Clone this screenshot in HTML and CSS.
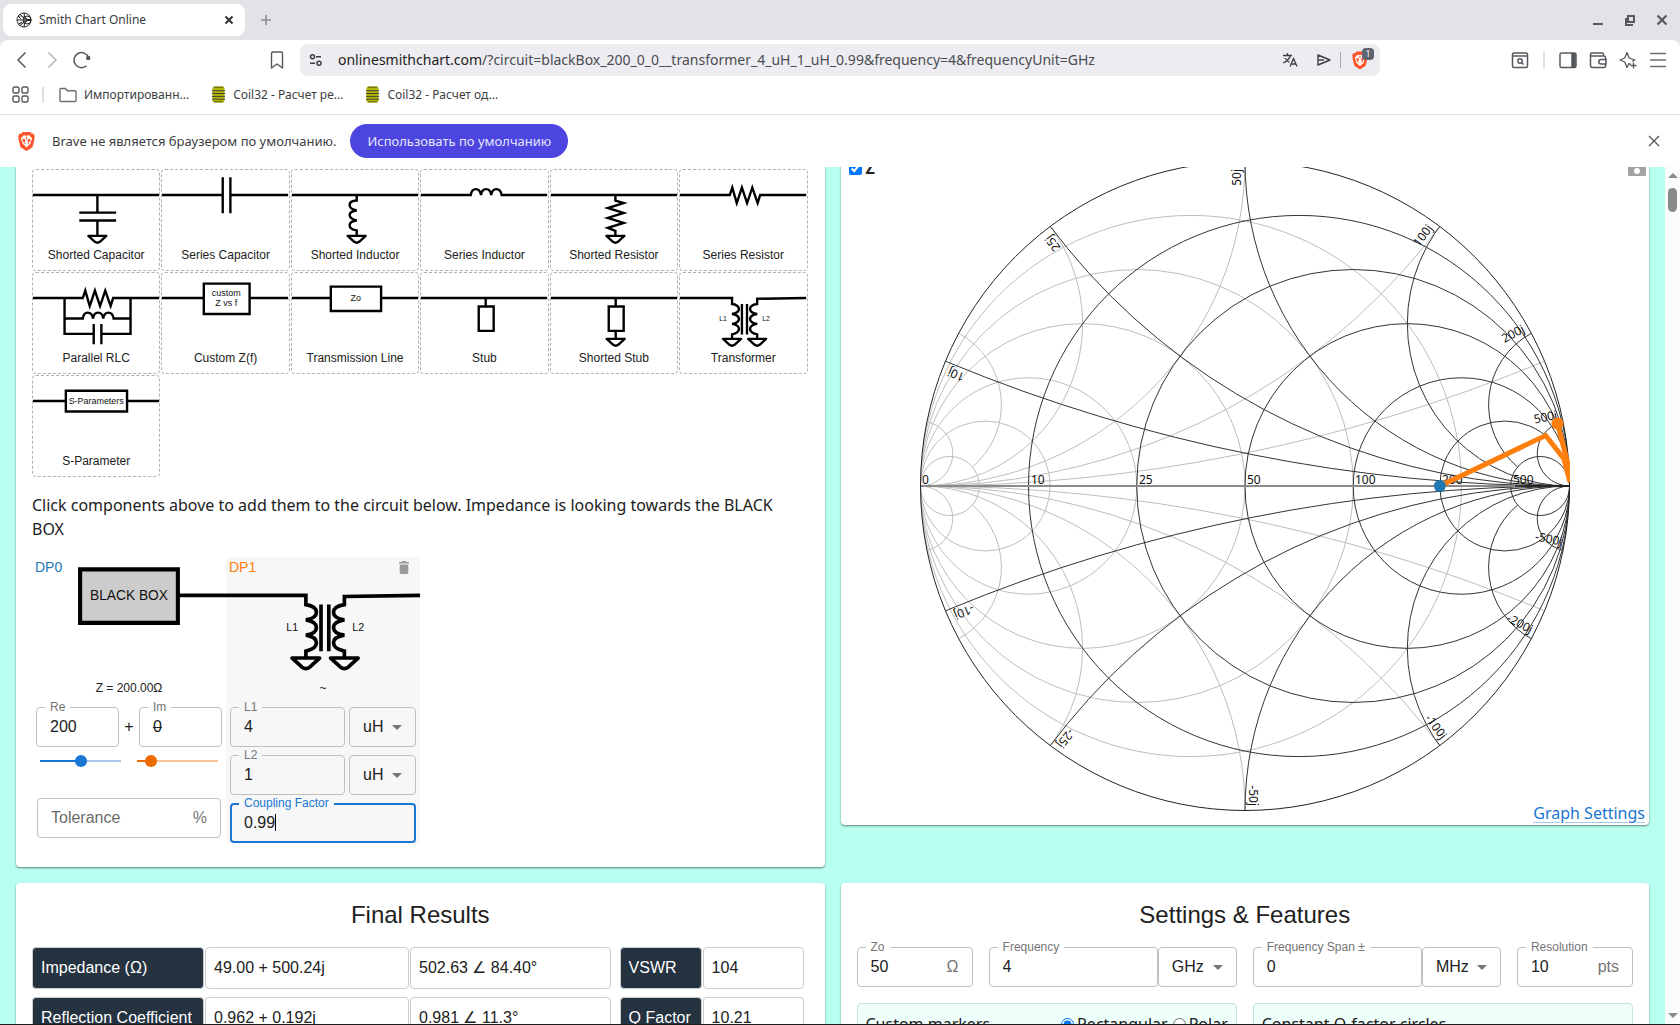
FILE: index.html
```html
<!DOCTYPE html>
<html lang="ru">
<head>
<meta charset="utf-8">
<title>Smith Chart Online</title>
<link rel="stylesheet" href="styles.css">
</head>
<body>
<svg class="defs" aria-hidden="true">
  <defs>
    <g id="ground"><path stroke-linejoin="round" d="M-9 0H9L2.500 6Q0 7.800 -2.500 6Z"/></g>
    <symbol id="s-shortcap" viewBox="0 0 127 75"><path d="M0 25H127M64.7 25V42.7M46.5 42.7H83.5M46.5 50.5H83.5M64.7 50.5V66"/><use href="#ground" x="64.7" y="66"/></symbol>
    <symbol id="s-sercap" viewBox="0 0 127 75"><path d="M0 25H61M61 7V43.300M68.700 7V43.300M68.700 25H127"/></symbol>
    <symbol id="s-shortind" viewBox="0 0 127 75"><path d="M0 25H127M65 25V30.500C55.500 31 55.500 38.500 65 40.500C55.500 41.500 55.500 48.500 65 50.500C55.500 51.500 55.500 59 65 60.500V66"/><use href="#ground" x="65" y="66"/></symbol>
    <symbol id="s-serind" viewBox="0 0 127 75"><path d="M0 25H50C51 17 59 17 60.300 25C61.300 17 69.500 17 70.600 25C71.600 17 79.800 17 81 25H127"/></symbol>
    <symbol id="s-shortres" viewBox="0 0 127 75"><path d="M0 25H127M64.700 25V30.500L73 33L57 38L73 43L57 48L73 53L57 58L64.700 61V66"/><use href="#ground" x="64.700" y="66"/></symbol>
    <symbol id="s-serres" viewBox="0 0 127 75"><path d="M0 25H50L52.500 17.500L57 33L62.200 17.500L67.400 33L72.600 17.500L78 33L80.500 25H127"/></symbol>
    <symbol id="s-rlc" viewBox="0 0 127 75"><path d="M0 25H50L52.500 17.500L57 33L62.200 17.500L67.400 33L72.600 17.500L78 33L80.500 25H127M31.700 25V61H61M98 25V61H68.700M61 51V71.500M68.700 51V71.500M31.700 45.600H50C51 37.600 59 37.600 60.300 45.600C61.300 37.600 69.500 37.600 70.600 45.600C71.600 37.600 79.800 37.600 81 45.600H98"/></symbol>
    <symbol id="s-custom" viewBox="0 0 127 75"><path d="M0 25H42M88 25H127M42 10.500H88V41H42Z"/><text x="64.500" y="23.300">custom</text><text x="64.500" y="33">Z vs f</text></symbol>
    <symbol id="s-line" viewBox="0 0 127 75"><path d="M0 25H39M89.500 25H127M39 13.500H89.500V38H39Z"/><text x="64" y="28">Zo</text></symbol>
    <symbol id="s-stub" viewBox="0 0 127 75"><path d="M0 25H127M65 25V33.500M58 33.500H73V58H58Z"/></symbol>
    <symbol id="s-shortstub" viewBox="0 0 127 75"><path d="M0 25H127M65 25V33.500M58 33.500H73V58H58ZM65 58V66"/><use href="#ground" x="65" y="66"/></symbol>
    <symbol id="s-trans" viewBox="0 0 127 75"><path d="M0 25H52.300V31C61.500 32.500 61.500 39.500 52.300 41C61.500 42.500 61.500 49.500 52.300 51C61.500 52.500 61.500 59.500 52.300 61.500V66M127 25L77.500 25.700V31C68 32.500 68 39.500 77.500 41C68 42.500 68 49.500 77.500 51C68 52.500 68 59.500 77.500 61.500V66M62.200 31V61.500M67.300 31V61.500"/><use href="#ground" x="52.300" y="66"/><use href="#ground" x="77.500" y="66"/><text class="tiny" x="43.300" y="48">L1</text><text class="tiny" x="86.500" y="48">L2</text></symbol>
    <symbol id="s-sparam" viewBox="0 0 127 75"><path d="M0 25H33M94.500 25H127M33 14.700H94.500V35.500H33Z"/><text x="63.500" y="28">S-Parameters</text></symbol>
    <symbol id="s-blackbox" viewBox="0 0 127 75"><path class="filled" d="M31.500 8H95.500V43H31.500Z"/><path d="M95.500 25H127"/><text x="63.500" y="28">BLACK BOX</text></symbol>
    <symbol id="brave" viewBox="0 0 18 20"><path fill="#fb542b" d="M5 0h8l1.600 1.800 1.700-.3 1.500 3-.5 1.500.2 1.500-2.200 8.500-6.300 4-6.300-4L.5 7.500.7 6 .2 4.500l1.500-3 1.700.3z"/><path fill="#fff" d="M6 3.500l3 .5 3-.5 3 3.300-1.800 4.200.2 1.500-2 1.300L9 16.500l-2.400-2.700-2-1.300.2-1.500L3 6.800z"/><path fill="#fb542b" d="M4.500 7l3 .7.500 1.500-1.500 2L8 12.200v.8L6.500 12 5.500 10zM13.500 7l-3 .7-.5 1.500 1.500 2-1.500 1v.8l1.500-1 1-2zM8.300 5h1.400l-.2 2.500h-1z"/></symbol>
    <symbol id="coil" viewBox="0 0 16 18"><rect x="1.500" y=".5" width="13" height="17" rx="2.500" fill="#b5b800"/><path d="M1 5h14M1 8h14M1 11h14M1 14h14" stroke="#2a2740" stroke-width=".9"/><path d="M3 1.200h10M3 16.800h10" stroke="#55580c" stroke-width="1"/></symbol>
    <g id="grid">
      <circle cx="54.120" r="270.580"/><circle cx="108.230" r="216.470"/><circle cx="162.350" r="162.350"/><circle cx="216.470" r="108.230"/><circle cx="259.760" r="64.940"/><circle cx="295.180" r="29.520"/>
      <circle cx="324.700" cy="-1623.500" r="1623.500"/><circle cx="324.700" cy="-649.400" r="649.400"/><circle cx="324.700" cy="-324.700" r="324.700"/><circle cx="324.700" cy="-162.350" r="162.350"/><circle cx="324.700" cy="-32.470" r="32.470"/>
      <circle cx="324.700" cy="1623.500" r="1623.500"/><circle cx="324.700" cy="649.400" r="649.400"/><circle cx="324.700" cy="324.700" r="324.700"/><circle cx="324.700" cy="162.350" r="162.350"/><circle cx="324.700" cy="32.470" r="32.470"/>
      <path d="M286.500 -152.800A81.175 81.175 0 0 0 272.600 -19M286.500 152.800A81.175 81.175 0 0 1 272.600 19"/>
    </g>
    <clipPath id="disc"><circle r="324.700"/></clipPath>
  </defs>
</svg>

<header class="browser">
  <div class="tabs">
    <div class="tab">
      <svg width="16" height="16" viewBox="0 0 16 16" fill="none" stroke="#222"><circle cx="8" cy="8" r="7"/><circle cx="11" cy="8" r="4"/><circle cx="5" cy="8" r="4" stroke="#888"/><path d="M1 8h14M4 2q4 6 11 6M4 14q4-6 11-6M8 1q0 7 7 7M8 15q0-7 7-7M2 4l3 3M3 12l3-2"/></svg>
      <span class="tab-title">Smith Chart Online</span>
      <button class="plain" aria-label="Закрыть вкладку"><svg width="10" height="10" viewBox="0 0 10 10" stroke="#333" stroke-width="2"><path d="M1.500 1.500l7 7M8.500 1.500l-7 7"/></svg></button>
    </div>
    <button class="plain newtab" aria-label="Новая вкладка"><svg width="12" height="12" viewBox="0 0 12 12" stroke="#8b8b91" stroke-width="1.600"><path d="M6 1v10M1 6h10"/></svg></button>
    <div class="winbtns">
      <button class="plain" aria-label="Свернуть"><svg width="12" height="12" viewBox="0 0 12 12"><path d="M1 9h10v2H1z" fill="#55585d"/></svg></button>
      <button class="plain" aria-label="Развернуть"><svg width="12" height="12" viewBox="0 0 12 12" fill="none" stroke="#55585d" stroke-width="2"><path d="M4 2h6v6H4zM2 4v7h7"/></svg></button>
      <button class="plain" aria-label="Закрыть"><svg width="12" height="12" viewBox="0 0 12 12" stroke="#55585d" stroke-width="2.200"><path d="M1.500 1.500l9 9M10.500 1.500l-9 9"/></svg></button>
    </div>
  </div>

  <div class="toolbar">
    <div class="nav">
      <button class="plain" aria-label="Назад"><svg width="20" height="20" viewBox="0 0 20 20" fill="none" stroke="#55585d" stroke-width="1.500"><path d="M13.500 2.500L6 10l7.500 7.500"/></svg></button>
      <button class="plain" aria-label="Вперёд"><svg width="20" height="20" viewBox="0 0 20 20" fill="none" stroke="#b5b6ba" stroke-width="1.500"><path d="M6.500 2.500L14 10l-7.500 7.500"/></svg></button>
      <button class="plain" aria-label="Обновить"><svg width="20" height="20" viewBox="0 0 20 20" fill="none" stroke="#55585d" stroke-width="1.500"><path d="M14.500 15.700A7.500 7.500 0 1 1 16.500 7.500"/><circle cx="16.200" cy="8" r="1.500" fill="#55585d"/></svg></button>
    </div>
    <button class="plain mark" aria-label="Добавить в закладки"><svg width="16" height="20" viewBox="0 0 16 20" fill="none" stroke="#55585d" stroke-width="1.400" stroke-linejoin="round"><path d="M2.500 3.500a1.500 1.500 0 0 1 1.500-1.500h8a1.500 1.500 0 0 1 1.500 1.500V18L8 14l-5.500 4z"/></svg></button>
    <div class="omnibox">
      <svg width="14" height="14" viewBox="0 0 14 14" fill="none" stroke="#3c3f44" stroke-width="1.500"><circle cx="3.500" cy="3.800" r="2"/><path d="M7 3.800h5M1 10.200h5"/><circle cx="10" cy="10.200" r="2"/></svg>
      <span class="url"><b>onlinesmithchart.com</b>/?circuit=blackBox_200_0_0__transformer_4_uH_1_uH_0.99&amp;frequency=4&amp;frequencyUnit=GHz</span>
      <svg width="16" height="16" viewBox="0 0 16 16" fill="none" stroke="#3c3f44" stroke-width="1.300"><path d="M1 3.500h9M5.500 1v2.500M8.500 3.500C7.500 7 4.500 9.500 1 11M3 6c1.500 2.500 3 3.500 4.500 4.300M8 14.500l3.500-8 3.500 8M9.200 12h4.600"/></svg>
      <svg class="send" width="14" height="14" viewBox="0 0 14 14" fill="none" stroke="#3c3f44" stroke-width="1.400" stroke-linejoin="round"><path d="M1 2l12 5-12 5zM1 7h6"/></svg>
      <span class="sep dark"></span>
      <span class="shield"><svg width="16" height="19"><use href="#brave"/></svg><span class="badge">1</span></span>
    </div>
    <div class="tools">
      <svg width="18" height="18" viewBox="0 0 18 18" fill="none" stroke="#55585d" stroke-width="1.500"><rect x="1.500" y="2" width="15" height="14.500" rx="1.500"/><path d="M2 5h14M11 12l1.500 1.500"/><circle cx="9" cy="10" r="2.200"/></svg>
      <span class="sep"></span>
      <svg width="18" height="18" viewBox="0 0 18 18" fill="none" stroke="#55585d" stroke-width="1.500"><rect x="1" y="2" width="16" height="14.500" rx="1.500"/><path d="M14.500 2v14.500" stroke-width="4.500"/></svg>
      <svg width="18" height="18" viewBox="0 0 18 18" fill="none" stroke="#55585d" stroke-width="1.500"><path d="M16.500 8V6.500a1.500 1.500 0 0 0-1.500-1.500H1.500v9.500a2 2 0 0 0 2 2H15a1.500 1.500 0 0 0 1.500-1.500V13M1.500 5V3.500A1.500 1.500 0 0 1 3 2h10.500a1 1 0 0 1 1 1v2"/><path d="M17 8.500h-5a2.200 2.200 0 0 0 0 4.500h5z"/></svg>
      <svg width="18" height="18" viewBox="0 0 18 18" fill="none" stroke="#55585d" stroke-width="1.300" stroke-linejoin="round"><path d="M12 13.500L10 12.500 8 16.500 5.800 11 1 9l4.800-2L8 1.500 10.200 7 16 9l-3 1.500M14.500 11.500v6M11.500 14.500h6"/></svg>
      <svg width="18" height="18" viewBox="0 0 18 18" stroke="#6b6e73" stroke-width="1.600"><path d="M1 2.500h16M1 9h16M1 15.500h16"/></svg>
    </div>
  </div>

  <nav class="bookmarks">
    <svg width="17" height="17" viewBox="0 0 17 17" fill="none" stroke="#55585d" stroke-width="1.400"><rect x="1" y="1" width="6" height="6" rx="1.500"/><rect x="10" y="1" width="6" height="6" rx="1.500"/><rect x="1" y="10" width="6" height="6" rx="1.500"/><rect x="10" y="10" width="6" height="6" rx="1.500"/></svg>
    <span class="sep"></span>
    <a href="#folder"><svg width="18" height="16" viewBox="0 0 18 16" fill="none" stroke="#6b6e73" stroke-width="1.400"><path d="M1 2.500A1 1 0 0 1 2 1.500h4.500l2 2.300H16a1 1 0 0 1 1 1V13.500a1 1 0 0 1-1 1H2a1 1 0 0 1-1-1z"/></svg>Импортированн...</a>
    <a href="#coil1"><svg width="15" height="17"><use href="#coil"/></svg>Coil32 - Расчет ре...</a>
    <a href="#coil2"><svg width="15" height="17"><use href="#coil"/></svg>Coil32 - Расчет од...</a>
  </nav>

  <div class="infobar">
    <svg width="17" height="19"><use href="#brave"/></svg>
    <span class="info-text">Brave не является браузером по умолчанию.</span>
    <button class="primary">Использовать по умолчанию</button>
    <button class="plain info-close" aria-label="Закрыть"><svg width="12" height="12" viewBox="0 0 12 12" stroke="#55585d" stroke-width="1.400"><path d="M1 1l10 10M11 1L1 11"/></svg></button>
  </div>
</header>

<div class="viewport">
  <main class="page">
    <section class="card builder">
      <div class="palette">
        <button class="part"><svg><use href="#s-shortcap"/></svg>Shorted Capacitor</button>
        <button class="part"><svg><use href="#s-sercap"/></svg>Series Capacitor</button>
        <button class="part"><svg><use href="#s-shortind"/></svg>Shorted Inductor</button>
        <button class="part"><svg><use href="#s-serind"/></svg>Series Inductor</button>
        <button class="part"><svg><use href="#s-shortres"/></svg>Shorted Resistor</button>
        <button class="part"><svg><use href="#s-serres"/></svg>Series Resistor</button>
        <button class="part"><svg><use href="#s-rlc"/></svg>Parallel RLC</button>
        <button class="part"><svg><use href="#s-custom"/></svg>Custom Z(f)</button>
        <button class="part"><svg><use href="#s-line"/></svg>Transmission Line</button>
        <button class="part"><svg><use href="#s-stub"/></svg>Stub</button>
        <button class="part"><svg><use href="#s-shortstub"/></svg>Shorted Stub</button>
        <button class="part"><svg><use href="#s-trans"/></svg>Transformer</button>
        <button class="part"><svg><use href="#s-sparam"/></svg>S-Parameter</button>
      </div>
      <p class="intro">Click components above to add them to the circuit below. Impedance is looking towards the BLACK BOX</p>
      <div class="circuit">
        <div class="stage">
          <span class="dp dp0">DP0</span>
          <svg class="schematic"><use href="#s-blackbox"/></svg>
          <div class="caption">Z = 200.00Ω</div>
          <div class="row spread">
            <div class="field part-z"><label for="re">Re</label><input id="re" value="200"></div>
            <span>+</span>
            <div class="field part-z"><label for="im">Im</label><input id="im" class="struck" value="0"></div>
          </div>
          <div class="sliders">
            <input type="range" class="blue" aria-label="Re" min="0" max="100" value="50">
            <input type="range" class="orange" aria-label="Im" min="0" max="100" value="12">
          </div>
          <div class="field tolerance"><input aria-label="Tolerance" placeholder="Tolerance"><span class="unit">%</span></div>
        </div>
        <div class="stage shaded">
          <span class="dp dp1">DP1</span>
          <button class="plain trash" aria-label="Delete"><svg width="10" height="13" viewBox="0 0 10 13" fill="#9b9b9b"><path d="M0 1h2.500L3.300 0h3.400l.8 1H10v1.400H0zM.7 3.400h8.600v8.200a1.400 1.400 0 0 1-1.400 1.400H2.100a1.400 1.400 0 0 1-1.400-1.400z"/></svg></button>
          <svg class="schematic"><use href="#s-trans"/></svg>
          <div class="caption">~</div>
          <div class="row">
            <div class="field grow"><label for="l1">L1</label><input id="l1" value="4"></div>
            <div class="field pick"><select aria-label="L1 unit"><option>uH</option></select></div>
          </div>
          <div class="row">
            <div class="field grow"><label for="l2">L2</label><input id="l2" value="1"></div>
            <div class="field pick"><select aria-label="L2 unit"><option>uH</option></select></div>
          </div>
          <div class="field focused"><label for="k">Coupling Factor</label><input id="k" value="0.99"><span class="caret"></span></div>
        </div>
      </div>
    </section>

    <section class="card graph">
      <label class="toggle"><input type="checkbox" checked> Z</label>
      <button class="plain camera" aria-label="Save image"><svg width="18" height="15" viewBox="0 0 18 15"><path d="M1.500 2H5l1.500-2h5L13 2h3.500A1.500 1.500 0 0 1 18 3.500v10a1.500 1.500 0 0 1-1.500 1.500h-15A1.500 1.500 0 0 1 0 13.500v-10A1.500 1.500 0 0 1 1.500 2z" fill="#a3a3a3"/><circle cx="9" cy="10" r="3" fill="#fff"/></svg></button>
      <svg class="chart" viewBox="-325 -325 650 650">
        <g clip-path="url(#disc)" fill="none">
          <use href="#grid" transform="scale(-1,1)" stroke="#bdbdbd"/>
          <use href="#grid" stroke="#333"/>
          <path d="M-325 0H270" stroke="#8a8a8a" stroke-width="2"/>
          <path d="M270 0H325" stroke="#222" stroke-width="1.500"/>
        </g>
        <circle r="324.500" fill="none" stroke="#222"/>
        <g class="ticks">
          <text x="-323" y="-2">0</text><text x="-214" y="-2">10</text><text x="-106" y="-2">25</text><text x="2" y="-2">50</text><text x="110" y="-2">100</text><text x="197" y="-2">200</text><text x="268" y="-2">500</text>
        </g>
        <g class="ticks end">
          <text transform="rotate(-157.400)" x="318" y="-4">10j</text><text transform="rotate(-126.900)" x="318" y="-4">25j</text><text transform="rotate(-90)" x="317" y="-4">50j</text><text transform="rotate(-53.100)" x="319" y="-4">100j</text><text transform="rotate(-28.100)" x="320" y="-4">200j</text><text transform="rotate(-11.400)" x="320" y="-4">500j</text>
          <text transform="rotate(157.400)" x="318" y="-4">-10j</text><text transform="rotate(126.900)" x="320" y="-4">-25j</text><text transform="rotate(90)" x="320" y="-4">-50j</text><text transform="rotate(53.100)" x="321" y="-4">-100j</text><text transform="rotate(28.100)" x="321" y="-4">-200j</text><text transform="rotate(11.400)" x="322" y="-4">-500j</text>
        </g>
        <path d="M194.800 0L300.700 -50.500L319 -27L325 -4L322 -26L312.400 -62.500" fill="none" stroke="#ff7f0e" stroke-width="5"/>
        <circle cx="312.400" cy="-62.500" r="6" fill="#ff7f0e"/>
        <circle cx="194.800" cy="0" r="6" fill="#1f77b4"/>
      </svg>
      <a class="graph-settings" href="#graph-settings">Graph Settings</a>
    </section>

    <section class="card">
      <h2>Final Results</h2>
      <div class="results">
        <table>
          <tr><th class="c-name">Impedance (Ω)</th><td class="c-val">49.00 + 500.24j</td><td>502.63 ∠ 84.40°</td></tr>
          <tr><th>Reflection Coefficient</th><td>0.962 + 0.192j</td><td>0.981 ∠ 11.3°</td></tr>
        </table>
        <table>
          <tr><th class="c-half">VSWR</th><td>104</td></tr>
          <tr><th>Q Factor</th><td>10.21</td></tr>
        </table>
      </div>
    </section>

    <section class="card">
      <h2>Settings &amp; Features</h2>
      <div class="settings">
        <div class="field"><label for="zo">Zo</label><input id="zo" value="50"><span class="unit">Ω</span></div>
        <div class="pair">
          <div class="field grow"><label for="fr">Frequency</label><input id="fr" value="4"></div>
          <div class="field pick wide"><select aria-label="Frequency unit"><option>GHz</option></select></div>
        </div>
        <div class="pair">
          <div class="field grow"><label for="sp">Frequency Span ±</label><input id="sp" value="0"></div>
          <div class="field pick wide"><select aria-label="Span unit"><option>MHz</option></select></div>
        </div>
        <div class="field"><label for="rs">Resolution</label><input id="rs" value="10"><span class="unit">pts</span></div>
        <div class="panel">
          <span class="panel-title">Custom markers</span>
          <label><input type="radio" name="form" checked>Rectangular</label>
          <label><input type="radio" name="form">Polar</label>
        </div>
        <div class="panel"><span>Constant Q-factor circles</span></div>
      </div>
    </section>
  </main>
  <div class="scrollbar">
    <svg width="10" height="6" viewBox="0 0 10 6"><path d="M0 6l5-5 5 5z" fill="#8a8a8a"/></svg>
    <div class="thumb"></div>
    <svg width="10" height="6" viewBox="0 0 10 6"><path d="M0 0l5 5 5-5z" fill="#8a8a8a"/></svg>
  </div>
</div>
</body>
</html>
```
FILE: styles.css
```css
* { box-sizing: border-box; }

body {
  margin: 0;
  height: 100vh;
  display: flex;
  flex-direction: column;
  overflow: hidden;
  border-bottom: 1px solid #1c1c1e;
  font: 16px/24px "Noto Sans", sans-serif;
  color: #212121;
}

.defs { position: absolute; width: 0; height: 0; }
svg { flex: none; display: block; }
button, input, select { font: inherit; color: inherit; }
.plain { border: 0; padding: 0; background: none; }

/* Browser frame */
.browser { flex: none; background: #e3e2e7; font-size: 13px; line-height: 18px; color: #3b3d42; }
.tabs { display: flex; align-items: center; height: 40px; padding: 0 12px 0 3px; }
.tab { display: flex; align-items: center; gap: 7px; width: 242px; height: 32px; padding: 0 11px 0 13px; border-radius: 8px; background: #fff; font-size: 12px; }
.tab-title { flex: 1; }
.newtab { margin-left: 15px; }
.winbtns { display: flex; gap: 20px; margin-left: auto; }
.toolbar { display: flex; align-items: center; height: 40px; padding: 0 13px 0 12px; border-radius: 8px 8px 0 0; background: #fff; }
.nav { display: flex; gap: 10px; }
.mark { margin-left: 177px; }
.omnibox { display: flex; align-items: center; flex: 1; height: 32px; margin: 0 131px 0 15px; padding: 0 12px 0 9px; border-radius: 8px; background: #edecf1; font-size: 14px; }
.url { flex: 1; margin-left: 15px; color: #4a4c51; white-space: nowrap; }
.url b { font-weight: 400; color: #1d1e21; }
.send { margin: 0 9px 0 19px; }
.sep { width: 2px; height: 16px; background: #dfdee4; }
.sep.dark { width: 1px; background: #a9a9af; }
.shield { position: relative; margin-left: 11px; }
.badge { position: absolute; top: -3px; left: 10px; width: 12px; height: 12px; border-radius: 4px; background: #5f6370; color: #fff; font-size: 8px; line-height: 12px; text-align: center; }
.tools { display: flex; align-items: center; gap: 12px; }
.tools .sep { margin: 0 2px; }
.bookmarks { display: flex; align-items: center; height: 35px; padding: 0 12px 5px; background: #fff; border-bottom: 1px solid #e0dfe4; font-size: 12px; }
.bookmarks .sep { margin: 0 15px 0 13px; }
.bookmarks a { display: flex; align-items: center; gap: 7px; margin-right: 22px; color: inherit; text-decoration: none; }
.infobar { display: flex; align-items: center; height: 52px; padding: 0 20px 0 18px; background: #fff; }
.info-text { margin: 0 14px 0 17px; }
.primary { height: 34px; padding: 0 17px; border: 0; border-radius: 17px; background: #4c45e0; color: #e6e5fb; }
.info-close { margin-left: auto; }

/* Scrolled page */
.viewport { flex: 1; min-height: 0; display: flex; overflow: hidden; background: #b9fff0; }
.page {
  flex: 1;
  display: grid;
  grid-template-columns: 1fr 1fr;
  gap: 16px;
  align-items: start;
  align-content: start;
  height: max-content;
  margin-top: -16px;
  padding: 0 16px;
}
.card { position: relative; padding: 16px; border-radius: 4px; background: #fff; box-shadow: 0 1px 2px rgba(0, 0, 0, .5); }
.scrollbar { display: flex; flex-direction: column; align-items: center; gap: 10px; width: 15px; padding: 5px 0; background: #fcfcfc; }
.thumb { width: 9px; height: 24px; margin-bottom: auto; border-radius: 5px; background: #8a8a8a; }

.builder { padding: 18px 16px 24px; font-family: "Liberation Sans", sans-serif; }
.palette { display: grid; grid-template-columns: repeat(6, 1fr); column-gap: 1px; row-gap: 1px; margin-right: 1px; }
.part { height: 102px; padding: 0; border: 1px dashed #b0b0b8; border-radius: 4px; background: none; display: flex; flex-direction: column; align-items: center; font-size: 12px; line-height: 20px; }
.part svg { width: 100%; height: 75px; }
.part svg, .schematic { fill: none; stroke: #000; stroke-width: 2.4px; }
symbol text { fill: #111; stroke: none; font: 9px "Liberation Sans", sans-serif; text-anchor: middle; }
symbol .tiny { font-size: 7px; }
symbol .filled { fill: #ccc; stroke-width: 2.7px; }
.intro { margin: 16px 0; font-family: "Noto Sans", sans-serif; }

.circuit { display: flex; }
.stage { position: relative; width: 194px; padding: 0 4px; border-radius: 4px; }
.shaded { background: #f7f7f7; }
.schematic { width: 194px; height: 115px; margin: 0 -4px 8px; }
.dp { position: absolute; top: 2px; left: 3px; font-size: 14px; line-height: 16px; }
.dp0 { color: #1f77b4; }
.dp1 { color: #ff7f0e; }
.trash { position: absolute; top: 4px; right: 11px; }
.caption { margin-bottom: 11px; font-size: 12px; line-height: 16px; text-align: center; }
.row { display: flex; gap: 4px; margin-bottom: 8px; }
.spread { justify-content: space-between; align-items: center; }
.grow { flex: 1; }

.field { position: relative; display: flex; align-items: center; height: 40px; min-width: 0; border: 1px solid #c0c0c0; border-radius: 4px; padding: 0 13px; font-family: "Liberation Sans", sans-serif; }
.field label { position: absolute; top: -9px; left: 8px; padding: 0 5px; background: #fff; color: #757575; font-size: 12px; line-height: 16px; white-space: nowrap; }
.shaded .field label { background: #f7f7f7; }
.field input { flex: 1; width: 0; min-width: 0; border: 0; padding: 0; background: none; outline: 0; }
.field input::placeholder { color: #6b6b6b; }
.struck { text-decoration: line-through; }
.unit { color: #757575; }
.part-z { width: 83px; }
.tolerance { margin: 0 1px; }
.pick { width: 67px; padding: 0; }
.pick.wide { width: 79px; }
.pick select { appearance: none; width: 100%; height: 100%; padding: 0 13px; border: 0; background: none; outline: 0; }
.pick::after { content: ""; position: absolute; right: 13px; top: 17px; border: 5px solid transparent; border-top-color: #757575; border-bottom: 0; pointer-events: none; }
.field.focused { border: 2px solid #1976d2; padding: 0 12px; }
.shaded .focused label { top: -10px; left: 7px; color: #1976d2; }
.caret { position: absolute; left: 43px; top: 9px; width: 1px; height: 17px; background: #000; }

.sliders { display: flex; justify-content: space-between; padding: 0 4px; margin-bottom: 31px; }
.sliders input { appearance: none; width: 81px; height: 12px; margin: 0; background: none; }
.sliders input::-webkit-slider-runnable-track { height: 2px; }
.sliders input::-webkit-slider-thumb { appearance: none; width: 12px; height: 12px; margin-top: -5px; border-radius: 50%; }
.blue::-webkit-slider-runnable-track { background: linear-gradient(90deg, #1976d2 50%, #a6c8ec 50%); }
.orange::-webkit-slider-runnable-track { background: linear-gradient(90deg, #ed6c02 18%, #f9c499 18%); }
.blue::-webkit-slider-thumb { background: #1976d2; }
.orange::-webkit-slider-thumb { background: #ed6c02; }

/* Smith chart */
.graph { padding: 10px 16px 14px; }
.chart { width: 650px; max-width: 100%; height: auto; margin: 0 auto; }
.ticks { font: 12px "Noto Sans", sans-serif; fill: #111; }
.end { text-anchor: end; }
.toggle { position: absolute; top: 5px; left: 8px; display: flex; gap: 4px; line-height: 24px; font-weight: 700; }
.toggle input { width: 13px; height: 13px; margin: 6px 0 0; accent-color: #0075ff; }
.camera { position: absolute; top: 10px; right: 3px; }
.graph-settings { position: absolute; right: 4px; bottom: 0; color: #1976d2; text-decoration-color: #a3c8ed; text-underline-offset: 3px; }

h2 { margin: 0 0 16px; font: 24px/32px "Liberation Sans", sans-serif; text-align: center; }

.results { display: grid; grid-template-columns: 581fr 186fr; column-gap: 7px; margin: -8px 4px 0 -1px; font-family: "Liberation Sans", sans-serif; }
table { width: 100%; table-layout: fixed; border-collapse: separate; border-spacing: 1px 8px; }
th, td { height: 42px; padding: 0 8px; border: 1px solid #ccc; border-radius: 4px; font-weight: 400; text-align: left; white-space: nowrap; }
th { background: #253240; color: #fff; }
.c-name { width: 172px; }
.c-val { width: 204px; }
.c-half { width: 82px; }

.settings { display: grid; grid-template-columns: repeat(6, 1fr); gap: 16px; }
.pair { grid-column: span 2; display: flex; }
.panel { grid-column: span 3; display: flex; height: 120px; padding: 8px; border: 1px solid #c5e3dd; border-radius: 4px; background: #eefffc; }
.panel-title { flex: 1; }
.panel label { display: flex; gap: 3px; margin-left: 5px; height: 24px; }
.panel input { width: 13px; height: 13px; margin: 6px 0 0; accent-color: #0075ff; }
```
